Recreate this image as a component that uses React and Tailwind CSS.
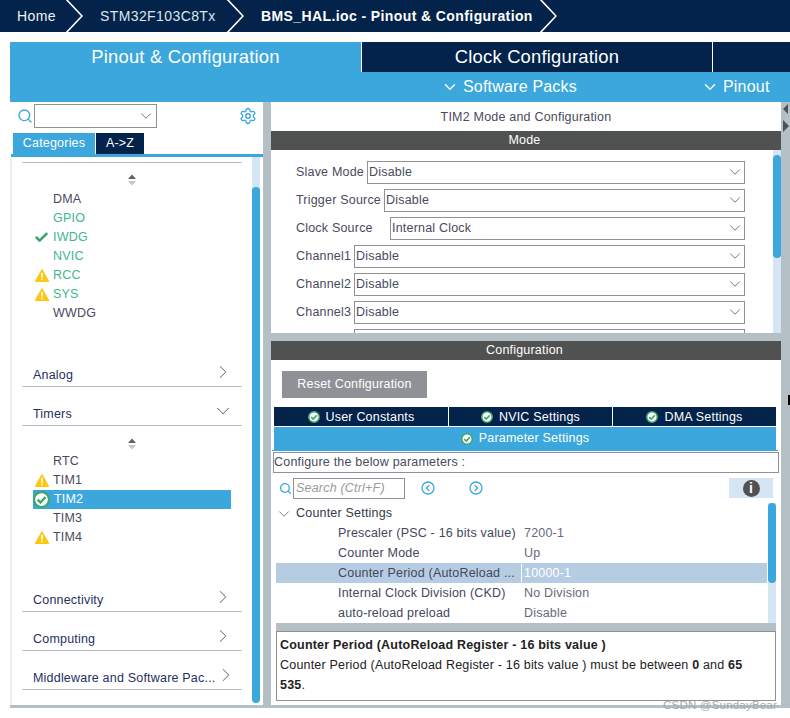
import { ChevronDown, ChevronRight, Search, Settings, Check } from "lucide-react";

const navy = "bg-[#03234b]";

// Breadcrumb arrow
function Crumb() {
  return (
    <svg width="17" height="32" viewBox="0 0 17 32" className="shrink-0">
      <path d="M0 -1 L16 16 L0 33" fill="none" stroke="#fff" strokeWidth="1.6" />
    </svg>
  );
}

function Warn({ className = "" }) {
  return (
    <svg width="14" height="13" viewBox="0 0 14 13" className={className}>
      <path d="M7 0.5 L13.8 12.5 L0.2 12.5 Z" fill="#fdc70f" stroke="#fdc70f" strokeLinejoin="round" />
      <rect x="6.2" y="3.8" width="1.6" height="5" fill="#fff" />
      <rect x="6.2" y="9.6" width="1.6" height="1.6" fill="#fff" />
    </svg>
  );
}

function CircleCheck({ size = 12 }) {
  return (
    <svg width={size} height={size} viewBox="0 0 16 16" className="shrink-0">
      <circle cx="8" cy="8" r="7" fill="#fff" stroke="#3ea66b" strokeWidth="2" />
      <path d="M4.3 8.2 L7 10.8 L11.8 5.6" fill="none" stroke="#3ea66b" strokeWidth="2.2" />
    </svg>
  );
}

function SortArrows({ className = "" }) {
  return (
    <div className={`flex justify-center ${className}`}>
      <svg width="10" height="12" viewBox="0 0 10 12">
        <path d="M5 0.5 L9 5 L1 5 Z" fill="#5f6368" />
        <path d="M5 11.5 L9 7 L1 7 Z" fill="#c4c8cc" />
      </svg>
    </div>
  );
}

function ListItem({ label, icon, green }) {
  return (
    <div className="h-[19px] flex items-center relative pl-[31px]">
      {icon === "warn" && <Warn className="absolute left-[13px] top-[3px]" />}
      {icon === "check" && (
        <Check size={15} strokeWidth={4} className="absolute left-[12px] top-[2px] text-[#3ea66b]" />
      )}
      <span className={green ? "text-[#3fb68e]" : "text-[#4a4a5c]"}>{label}</span>
    </div>
  );
}

function Category({ label, open, spacer = "h-[27px]" }) {
  return (
    <div className={`${spacer} flex items-end`}>
      <div className="w-[220px] h-[27px] pl-[11px] pr-[8px] pb-[1px] border-b border-[#b4bfc6] flex items-end justify-between text-[#1f2f5f]">
        <span className="whitespace-nowrap overflow-visible">{label}</span>
        {open ? (
          <ChevronDown size={22} strokeWidth={1.1} className="text-[#777] shrink-0 mb-[2px]" />
        ) : (
          <ChevronRight size={22} strokeWidth={1.1} className="text-[#777] shrink-0 mb-[2px]" />
        )}
      </div>
    </div>
  );
}

function ModeRow({ label, width, value }) {
  return (
    <div className="h-[28px] flex items-center">
      <span className="shrink-0 text-[#4a4a5c]">{label}</span>
      <div
        className="ml-auto h-[23px] border border-[#8e9297] flex items-center justify-between pl-[1px] text-[#4a4a5c]"
        style={{ width }}
      >
        <span>{value}</span>
        <ChevronDown size={18} strokeWidth={1.2} className="text-[#666]" />
      </div>
    </div>
  );
}

function ParamRow({ label, value, active }) {
  return (
    <div className={`h-[20px] flex items-center ${active ? "bg-[#b6cce3]" : ""}`}>
      <span className={`w-[246px] pl-[62px] shrink-0 whitespace-nowrap text-[#45475a] ${active ? "border-r border-white" : ""}`}>
        {label}
      </span>
      <span className={`pl-[2px] ${active ? "text-white" : "text-[#666a78]"}`}>{value}</span>
    </div>
  );
}

function CircleArrow({ dir }) {
  return (
    <svg width="14" height="14" viewBox="0 0 14 14">
      <circle cx="7" cy="7" r="6" fill="none" stroke="#3ba7dc" strokeWidth="1.3" />
      <path
        d={dir === "left" ? "M8.2 4.2 L5.4 7 L8.2 9.8" : "M5.8 4.2 L8.6 7 L5.8 9.8"}
        fill="none"
        stroke="#3ba7dc"
        strokeWidth="1.3"
      />
    </svg>
  );
}

function ConfigTab({ label, className }) {
  return (
    <div className={`${navy} h-[19px] pt-[1px] flex items-center justify-center gap-[6px] text-white ${className}`}>
      <CircleCheck />
      <span>{label}</span>
    </div>
  );
}

export default function App() {
  return (
    <div className="relative w-[790px] h-[718px] overflow-hidden bg-white text-[12.5px] tracking-[0.2px] font-['Liberation_Sans',Arial,sans-serif]">
      {/* Breadcrumb */}
      <div className={`${navy} h-[32px] flex items-center text-white text-[14px] tracking-[0.4px]`}>
        <span className="pl-[17px] w-[66px] text-[#eef2f6]">Home</span>
        <Crumb />
        <span className="pl-[17px] w-[144px] text-[#dfe4ea]">STM32F103C8Tx</span>
        <Crumb />
        <span className="pl-[17px] w-[296px] font-bold whitespace-nowrap">BMS_HAL.ioc - Pinout &amp; Configuration</span>
        <Crumb />
      </div>

      <div className="pt-[10px] pl-[10px]">
        {/* Main tabs */}
        <div className="flex h-[30px] text-[18.4px] text-white">
          <div className="w-[351px] bg-[#3ba7dc] flex items-center justify-center">Pinout &amp; Configuration</div>
          <div className={`${navy} w-[350px] ml-[1px] flex items-center justify-center`}>Clock Configuration</div>
          <div className={`${navy} flex-1 ml-[1px]`} />
        </div>
        <div className="h-[30px] bg-[#3ba7dc] flex items-center text-white text-[16px] tracking-[0.2px]">
          <ChevronDown size={18} strokeWidth={2} className="ml-[431px]" />
          <span className="ml-[4px]">Software Packs</span>
          <ChevronDown size={18} strokeWidth={2} className="ml-[124px]" />
          <span className="ml-[4px]">Pinout</span>
        </div>

        <div className="flex h-[606px] bg-[#b4bfc6]">
          {/* Left panel */}
          <div className="w-[253px] h-[603px] bg-white shrink-0">
            <div className="h-[31px] pb-[3px] flex items-center">
              <Search size={16} strokeWidth={2} className="ml-[7px] text-[#3ba7dc]" />
              <div className="ml-[1px] w-[123px] h-[24px] border border-[#8e9297] flex items-center justify-end pr-[1px]">
                <ChevronDown size={18} strokeWidth={1.2} className="text-[#666]" />
              </div>
              <Settings size={18} strokeWidth={1.8} className="ml-[82px] text-[#3ba7dc]" />
            </div>
            <div className="flex pl-[3px] h-[21px] text-white">
              <div className="w-[82px] bg-[#3ba7dc] flex items-center justify-center">Categories</div>
              <div className={`${navy} w-[48px] ml-[1px] flex items-center justify-center`}>A-&gt;Z</div>
            </div>
            <div className="ml-[1px] h-[3px] bg-[#3ba7dc]" />
            <div className="flex h-[548px] border-l-2 border-[#eeeeee]">
              <div className="w-[239px] pl-[10px]">
                <div className="w-[220px] mt-[5px] border-t border-[#b4bfc6]" />
                <SortArrows className="w-[220px] mt-[11px] mb-[4px]" />
                <ListItem label="DMA" />
                <ListItem label="GPIO" green />
                <ListItem label="IWDG" green icon="check" />
                <ListItem label="NVIC" green />
                <ListItem label="RCC" green icon="warn" />
                <ListItem label="SYS" green icon="warn" />
                <ListItem label="WWDG" />
                <Category label="Analog" spacer="h-[64px]" />
                <Category label="Timers" open spacer="h-[39px]" />
                <SortArrows className="w-[220px] mt-[12px] mb-[2px]" />
                <ListItem label="RTC" />
                <ListItem label="TIM1" icon="warn" />
                <div className="h-[19px] w-[198px] ml-[11px] bg-[#3ba7dc] flex items-center relative pl-[21px] text-white">
                  <span className="absolute left-0 top-[1px]">
                    <CircleCheck size={17} />
                  </span>
                  TIM2
                </div>
                <ListItem label="TIM3" />
                <ListItem label="TIM4" icon="warn" />
                <Category label="Connectivity" spacer="h-[65px]" />
                <Category label="Computing" spacer="h-[39px]" />
                <Category label="Middleware and Software Pac..." spacer="h-[39px]" />
              </div>
              <div className="w-[8px] ml-[1px] h-[546px] bg-[#d5e5f3] rounded-b-full">
                <div className="mt-[30px] h-[516px] bg-[#3ba7dc] rounded-full" />
              </div>
            </div>
          </div>

          {/* Right panel */}
          <div className="ml-[8px] w-[510px] shrink-0 flex flex-col">
            {/* Mode */}
            <div className="h-[231px] bg-white overflow-hidden flex flex-col">
              <div className="h-[29px] pt-[1px] flex items-center justify-center text-[#4a4a5c] shrink-0">
                TIM2 Mode and Configuration
              </div>
              <div className="h-[19px] pr-[3px] bg-[#505251] text-white flex items-center justify-center shrink-0">Mode</div>
              <div className="flex flex-1 min-h-0">
                <div className="w-[474px] pl-[25px] pt-[8px] overflow-hidden">
                  <ModeRow label="Slave Mode" value="Disable" width={378} />
                  <ModeRow label="Trigger Source" value="Disable" width={361} />
                  <ModeRow label="Clock Source" value="Internal Clock" width={355} />
                  <ModeRow label="Channel1" value="Disable" width={391} />
                  <ModeRow label="Channel2" value="Disable" width={391} />
                  <ModeRow label="Channel3" value="Disable" width={391} />
                  <ModeRow label="" value="" width={391} />
                </div>
                <div className="ml-[28px] w-[8px] bg-[#d5e5f3]">
                  <div className="mt-[5px] h-[103px] bg-[#3ba7dc] rounded-full" />
                </div>
              </div>
            </div>

            {/* Configuration */}
            <div className="mt-[8px] h-[364px] bg-white">
              <div className="h-[19px] pr-[3px] bg-[#505251] text-white flex items-center justify-center">Configuration</div>
              <div className="ml-[11px] mt-[11px] w-[145px] h-[27px] bg-[#8e9297] text-white flex items-center justify-center">
                Reset Configuration
              </div>
              <div className="mt-[9px] ml-[3px] flex gap-[1px] w-[502px]">
                <ConfigTab label="User Constants" className="w-[174px]" />
                <ConfigTab label="NVIC Settings" className="w-[163px]" />
                <ConfigTab label="DMA Settings" className="flex-1" />
              </div>
              <div className="mt-[1px] ml-[3px] w-[502px] h-[23px] bg-[#3ba7dc] text-white flex items-center justify-center gap-[6px]">
                <CircleCheck />
                Parameter Settings
              </div>
              <div className="ml-[1px] w-[506px] h-[1px] bg-[#3ba7dc]" />
              <div className="mt-[1px] ml-[2px] w-[506px] h-[21px] border border-[#8e9297] flex items-center text-[#4a4a5c] whitespace-nowrap">
                Configure the below parameters :
              </div>
              <div className="h-[24px] mt-[3px] flex items-center">
                <Search size={13} strokeWidth={2.4} className="ml-[8px] text-[#3ba7dc]" />
                <div className="ml-[1px] w-[112px] h-[21px] border border-[#8e9297] flex items-center pl-[2px] italic text-[#9a9a9a]">
                  Search (Ctrl+F)
                </div>
                <span className="ml-[16px] flex"><CircleArrow dir="left" /></span>
                <span className="ml-[34px] flex"><CircleArrow dir="right" /></span>
                <div className="ml-auto mr-[8px] w-[44px] h-[20px] bg-[#d5e5f3] flex items-center justify-center">
                  <span className="w-[17px] h-[17px] rounded-full bg-[#505251] text-white text-[14px] font-bold flex items-center justify-center">i</span>
                </div>
              </div>
              <div className="ml-[5px] w-[500px] h-[120px] mt-[3px] flex">
                <div className="w-[491px] pt-[1px]">
                  <div className="h-[19px] flex items-center text-[#333a4a]">
                    <ChevronDown size={18} strokeWidth={1.1} className="-ml-[1px] text-[#666]" />
                    <span className="ml-[3px]">Counter Settings</span>
                  </div>
                  <ParamRow label="Prescaler (PSC - 16 bits value)" value="7200-1" />
                  <ParamRow label="Counter Mode" value="Up" />
                  <ParamRow label="Counter Period (AutoReload ..." value="10000-1" active />
                  <ParamRow label="Internal Clock Division (CKD)" value="No Division" />
                  <ParamRow label="auto-reload preload" value="Disable" />
                </div>
                <div className="ml-[1px] w-[8px] bg-[#d5e5f3]">
                  <div className="h-[80px] bg-[#3ba7dc] rounded-full" />
                </div>
              </div>
              <div className="ml-[5px] w-[500px] h-[8px] bg-[#b4bfc6]" />
              <div className="ml-[5px] w-[500px] h-[70px] border border-[#8e9297] pl-[3px] pt-[3px] leading-[20px] text-[#222] whitespace-nowrap">
                <div className="font-bold">Counter Period (AutoReload Register - 16 bits value )</div>
                <div>
                  Counter Period (AutoReload Register - 16 bits value ) must be between <b>0</b> and <b>65</b>
                </div>
                <div>
                  <b>535</b>.
                </div>
              </div>
            </div>
          </div>
        </div>
      </div>

      {/* Right gutter arrows */}
      <svg width="9" height="32" viewBox="0 0 9 32" className="absolute left-[781px] top-[103px]">
        <path d="M7 1 L7 11 L2 6 Z" fill="#505251" />
        <path d="M2 17 L2 29 L8 23 Z" fill="#505251" />
      </svg>
      <span className="absolute left-[788px] top-[395px] w-[2px] h-[10px] bg-black" />

      {/* Watermark */}
      <span className="absolute right-[13px] top-[697px] text-[11.5px] text-[#a4a9ad] tracking-[0.2px] whitespace-nowrap">
        CSDN @SundayBear
      </span>
    </div>
  );
}
